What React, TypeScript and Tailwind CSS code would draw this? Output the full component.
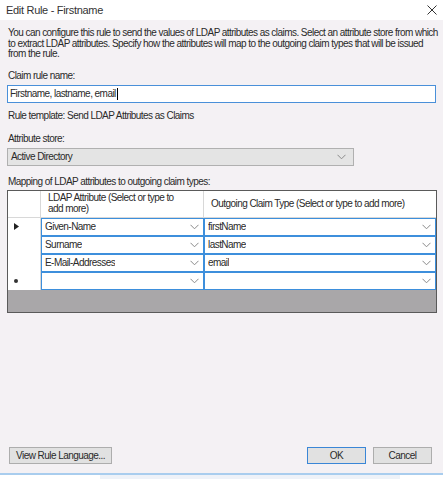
const font = { fontFamily: '"Liberation Sans", Arial, sans-serif' };

function Chevron() {
  return (
    <svg width="9" height="6" viewBox="0 0 9 6" className="shrink-0">
      <polyline points="0.5,0.8 4.5,4.8 8.5,0.8" fill="none" stroke="#8a8a8a" strokeWidth="1" />
    </svg>
  );
}

type Row = { marker: "arrow" | "star" | ""; attr: string; claim: string };

const rows: Row[] = [
  { marker: "arrow", attr: "Given-Name", claim: "firstName" },
  { marker: "", attr: "Surname", claim: "lastName" },
  { marker: "", attr: "E-Mail-Addresses", claim: "email" },
  { marker: "star", attr: "", claim: "" },
];

function Cell({ value, width }: { value: string; width: string }) {
  return (
    <div className={`${width} flex h-full items-center justify-between border-[1.5px] border-[#3d8fdc] bg-white pl-[3px] pr-[4px]`}>
      <span className="truncate">{value}</span>
      <Chevron />
    </div>
  );
}

export default function App() {
  return (
    <div
      className="flex h-[479px] w-[443px] flex-col overflow-hidden whitespace-nowrap bg-[#f4f1f4] text-[10px] tracking-[-0.55px] text-[#2a2a2a]"
      style={font}
    >
      {/* title bar */}
      <div className="flex h-[20px] shrink-0 items-center justify-between bg-white pl-[6px] pr-[6px]">
        <span className="text-[11px] tracking-[-0.3px] text-[#333]">Edit Rule - Firstname</span>
        <svg width="10" height="10" viewBox="0 0 10 10">
          <path d="M0.5 0.5 L9.5 9.5 M9.5 0.5 L0.5 9.5" stroke="#333" strokeWidth="1" />
        </svg>
      </div>

      <div className="flex flex-1 flex-col px-[7px]">
        <p className="mt-[8px] pl-[1px] leading-[10.5px]">
          You can configure this rule to send the values of LDAP attributes as claims. Select an attribute store from which
          <br />
          to extract LDAP attributes. Specify how the attributes will map to the outgoing claim types that will be issued
          <br />
          from the rule.
        </p>

        <div className="mt-[10px] pl-[1px] leading-[12px]">Claim rule name:</div>
        <div className="mt-[3px] flex h-[18px] w-[429px] items-center border border-[#4a90d9] bg-white pl-[2px]">
          Firstname, lastname, email
          <span className="ml-[1px] inline-block h-[12px] w-[1px] bg-black" />
        </div>

        <div className="mt-[7px] pl-[1px] leading-[12px]">Rule template: Send LDAP Attributes as Claims</div>

        <div className="mt-[11px] pl-[1px] leading-[12px]">Attribute store:</div>
        <div className="mt-[3px] flex h-[18px] w-[347px] items-center justify-between border border-[#b0b0b0] bg-[#e4e4e4] pl-[3px] pr-[7px]">
          Active Directory
          <Chevron />
        </div>

        <div className="mt-[10px] pl-[1px] leading-[12px]">Mapping of LDAP attributes to outgoing claim types:</div>

        {/* grid */}
        <div className="mt-[2px] flex h-[123px] w-[430px] flex-col border border-[#5a5a5a] bg-[#a9a7a9]">
          <div className="flex h-[27px] shrink-0 border-b border-[#d8d8d8] bg-white">
            <div className="w-[33px] shrink-0 border-r border-[#d8d8d8]" />
            <div className="flex w-[163px] shrink-0 items-center border-r border-[#d8d8d8] pl-[7px] leading-[10.5px]">
              LDAP Attribute (Select or type to
              <br />
              add more)
            </div>
            <div className="flex flex-1 items-center pl-[7px]">Outgoing Claim Type (Select or type to add more)</div>
          </div>
          {rows.map((r, i) => (
            <div key={i} className="flex h-[18px] shrink-0 bg-white">
              <div className="flex w-[33px] shrink-0 items-center border-r border-[#d8d8d8] pl-[6px]">
                {r.marker === "arrow" && (
                  <svg width="5" height="7" viewBox="0 0 5 7">
                    <path d="M0 0 L5 3.5 L0 7 Z" fill="#222" />
                  </svg>
                )}
                {r.marker === "star" && <span className="inline-block h-[4px] w-[4px] rounded-full bg-[#333]" />}
              </div>
              <Cell value={r.attr} width="w-[163px] shrink-0" />
              <Cell value={r.claim} width="flex-1" />
            </div>
          ))}
        </div>

        <div className="flex-1" />

        {/* buttons */}
        <div className="mb-[9px] flex items-center pl-[2px] pr-[4px]">
          <button className="flex h-[17px] w-[103px] items-center justify-center border border-[#adadad] bg-[#e1e1e1]">
            View Rule Language...
          </button>
          <div className="flex-1" />
          <button className="flex h-[17px] w-[59px] items-center justify-center border border-[#3a86d6] bg-[#e1e1e1]">
            OK
          </button>
          <button className="ml-[7px] flex h-[17px] w-[59px] items-center justify-center border border-[#adadad] bg-[#e1e1e1]">
            Cancel
          </button>
        </div>
      </div>

      {/* edge of the window behind */}
      <div className="flex h-[6px] shrink-0 border-t-2 border-[#a9cdee] bg-white">
        <div className="ml-[100px] h-[4px] w-[300px] bg-[#eef2f8]" />
      </div>
    </div>
  );
}
